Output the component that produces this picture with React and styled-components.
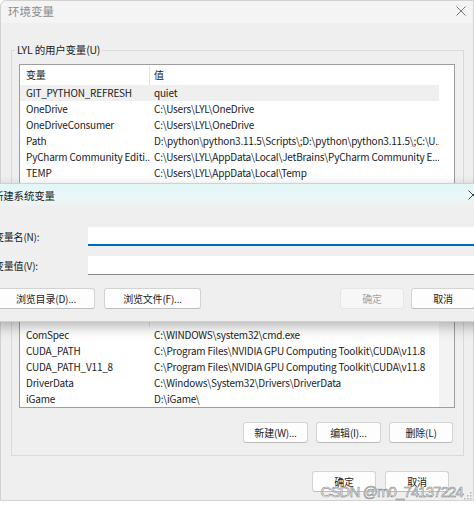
import React from "react";
import styled, { createGlobalStyle } from "styled-components";

const userVars = [
  ["GIT_PYTHON_REFRESH", "quiet"],
  ["OneDrive", "C:\\Users\\LYL\\OneDrive"],
  ["OneDriveConsumer", "C:\\Users\\LYL\\OneDrive"],
  ["Path", "D:\\python\\python3.11.5\\Scripts\\;D:\\python\\python3.11.5\\;C:\\U..."],
  ["PyCharm Community Editi...", "C:\\Users\\LYL\\AppData\\Local\\JetBrains\\PyCharm Community E..."],
  ["TEMP", "C:\\Users\\LYL\\AppData\\Local\\Temp"],
  ["TMP", "C:\\Users\\LYL\\AppData\\Local\\Temp"],
];

const systemVars = [
  ["ComSpec", "C:\\WINDOWS\\system32\\cmd.exe"],
  ["CUDA_PATH", "C:\\Program Files\\NVIDIA GPU Computing Toolkit\\CUDA\\v11.8"],
  ["CUDA_PATH_V11_8", "C:\\Program Files\\NVIDIA GPU Computing Toolkit\\CUDA\\v11.8"],
  ["DriverData", "C:\\Windows\\System32\\Drivers\\DriverData"],
  ["iGame", "D:\\iGame\\"],
];

const GlobalStyle = createGlobalStyle`
  html, body {
    margin: 0;
    padding: 0;
    background: #fff;
  }
  body {
    font-family: "Noto Sans CJK SC", "Microsoft YaHei", sans-serif;
    font-size: 10px;
    letter-spacing: -0.2px;
    color: #1b1b1b;
  }
  * {
    box-sizing: border-box;
  }
`;

const CloseIcon = ({ color = "#777" }) => (
  <svg width="10" height="10" viewBox="0 0 10 10">
    <path d="M0.5 0.5 L9.5 9.5 M9.5 0.5 L0.5 9.5" stroke={color} strokeWidth="1" fill="none" />
  </svg>
);

const VarList = ({ rows, height, track }) => (
  <ListBox style={{ height }}>
    <Table>
      <Row header>
        <NameCell header>变量</NameCell>
        <ValueCell>值</ValueCell>
      </Row>
      {rows.map(([name, value], i) => (
        <Row key={name} selected={track === false && i === 0}>
          <NameCell>{name}</NameCell>
          <ValueCell>{value}</ValueCell>
        </Row>
      ))}
    </Table>
    <ScrollTrack tinted={track} />
  </ListBox>
);

const App = () => {
  return (
    <Screen>
      <GlobalStyle />
      <Window>
        <TitleBar>
          <Title>环境变量</Title>
          <CloseIcon />
        </TitleBar>
        <Body>
          <Group>
            <Legend>LYL 的用户变量(U)</Legend>
            <VarList rows={userVars} height={170} track={false} />
            <ButtonRow top={10}>
              <Button w={65}>新建(N)...</Button>
              <Button w={65}>编辑(E)...</Button>
              <Button w={64}>删除(D)</Button>
            </ButtonRow>
          </Group>
          <Group gap>
            <Legend>系统变量(S)</Legend>
            <VarList rows={systemVars} height={102} track />
            <ButtonRow top={14}>
              <Button w={65}>新建(W)...</Button>
              <Button w={65}>编辑(I)...</Button>
              <Button w={64}>删除(L)</Button>
            </ButtonRow>
          </Group>
          <FooterRow>
            <Button w={64}>确定</Button>
            <Button w={64}>取消</Button>
          </FooterRow>
        </Body>
      </Window>

      <Dialog>
        <DialogTitle>
          <DialogCaption>新建系统变量</DialogCaption>
          <CloseIcon color="#444" />
        </DialogTitle>
        <DialogBody>
          <Field>
            <FieldLabel>变量名(N):</FieldLabel>
            <Input focused />
          </Field>
          <Field>
            <FieldLabel>变量值(V):</FieldLabel>
            <Input />
          </Field>
          <DialogButtons>
            <Button w={98}>浏览目录(D)...</Button>
            <Button w={97}>浏览文件(F)...</Button>
            <Spacer />
            <Button w={64} disabled>确定</Button>
            <Button w={64}>取消</Button>
          </DialogButtons>
        </DialogBody>
      </Dialog>

      <Grip width="8" height="8" viewBox="0 0 8 8">
        <rect x="6" y="0" width="1.5" height="1.5" fill="#b5b5b5" />
        <rect x="3" y="3" width="1.5" height="1.5" fill="#b5b5b5" />
        <rect x="6" y="3" width="1.5" height="1.5" fill="#b5b5b5" />
        <rect x="0" y="6" width="1.5" height="1.5" fill="#b5b5b5" />
        <rect x="3" y="6" width="1.5" height="1.5" fill="#b5b5b5" />
        <rect x="6" y="6" width="1.5" height="1.5" fill="#b5b5b5" />
      </Grip>
      <Watermark>CSDN @m0_74137224</Watermark>
    </Screen>
  );
};

const Screen = styled.div`
  position: relative;
  width: 474px;
  height: 505px;
  overflow: hidden;
  background: #fff;
`;

const Window = styled.div`
  width: 474px;
  height: 501px;
  display: flex;
  flex-direction: column;
  background: #efefef;
  border: 1px solid #d2d2d2;
  border-top-left-radius: 6px;
`;

const TitleBar = styled.div`
  height: 22px;
  flex-shrink: 0;
  display: flex;
  align-items: center;
  justify-content: space-between;
  padding: 0 7px 2px 7px;
  background: #f4f4f4;
  border-top-left-radius: 6px;
`;

const Title = styled.span`
  color: #8c8c8c;
  font-size: 11.5px;
  letter-spacing: 0;
`;

const Body = styled.div`
  display: flex;
  flex-direction: column;
  padding: 20px 9px 0 10px;
`;

const Group = styled.fieldset`
  margin: ${(p) => (p.gap ? "7px" : "0")} 0 0 0;
  padding: 7px 8px 12px 7px;
  border: 1px solid #d9d9d9;
  min-width: 0;
`;

const Legend = styled.legend`
  margin-left: -4px;
  padding: 0 2px;
  font-size: 10.5px;
  line-height: 14px;
  color: #1b1b1b;
`;

const ListBox = styled.div`
  display: flex;
  background: #fff;
  border: 1px solid #9d9d9d;
  overflow: hidden;
`;

const Table = styled.div`
  flex: 1;
  min-width: 0;
  display: flex;
  flex-direction: column;
`;

const Row = styled.div`
  display: grid;
  grid-template-columns: 130px 1fr;
  height: ${(p) => (p.header ? "20px" : "16px")};
  line-height: ${(p) => (p.header ? "20px" : "16px")};
  background: ${(p) => (p.selected ? "#efefef" : "#fff")};
  white-space: nowrap;
  color: #1b1b1b;
`;

const NameCell = styled.div`
  padding-left: 6px;
  overflow: hidden;
  border-right: ${(p) => (p.header ? "1px solid #e3e3e3" : "none")};
`;

const ValueCell = styled.div`
  padding-left: 4px;
  overflow: hidden;
`;

const ScrollTrack = styled.div`
  width: 15px;
  flex-shrink: 0;
  background: ${(p) => (p.tinted ? "#f3f3f3" : "#fff")};
`;

const ButtonRow = styled.div`
  display: flex;
  justify-content: flex-end;
  gap: 8px;
  margin-top: ${(p) => p.top}px;
  padding-right: 2px;
`;

const FooterRow = styled.div`
  display: flex;
  justify-content: flex-end;
  gap: 9px;
  margin-top: 15px;
  padding-right: 15px;
`;

const Button = styled.button`
  width: ${(p) => p.w}px;
  height: 21px;
  flex-shrink: 0;
  padding: 0;
  font-family: "Noto Sans CJK SC", "Microsoft YaHei", sans-serif;
  font-size: 10px;
  letter-spacing: -0.2px;
  color: ${(p) => (p.disabled ? "#a3a3a3" : "#1b1b1b")};
  background: ${(p) => (p.disabled ? "#f7f7f7" : "#fdfdfd")};
  border: 1px solid ${(p) => (p.disabled ? "#e6e6e6" : "#d3d3d3")};
  border-bottom-color: ${(p) => (p.disabled ? "#e6e6e6" : "#bdbdbd")};
  border-radius: 3px;
`;

const Dialog = styled.div`
  position: absolute;
  top: 183px;
  left: -6px;
  width: 492px;
  background: #efefef;
  border: 1px solid #c9d3d3;
  box-shadow: 0 5px 12px rgba(0, 0, 0, 0.28);
`;

const DialogTitle = styled.div`
  height: 22px;
  display: flex;
  align-items: center;
  justify-content: space-between;
  padding: 0 7px 0 0;
  background: linear-gradient(#e3f6f6, #e9f7f7 55%, #eff1f1);
  font-size: 10.5px;
  color: #1b1b1b;
`;

const DialogCaption = styled.span`
  margin-left: -2px;
`;

const DialogBody = styled.div`
  display: flex;
  flex-direction: column;
  gap: 10px;
  padding: 21px 10px 12px 2px;
`;

const Field = styled.div`
  display: grid;
  grid-template-columns: 91px 1fr;
  align-items: center;
`;

const FieldLabel = styled.label`
  margin-left: -3px;
  color: #1b1b1b;
`;

const Input = styled.div`
  height: 19px;
  background: #fff;
  border-bottom: ${(p) => (p.focused ? "2px solid #0067c0" : "1px solid #8a8a8a")};
`;

const DialogButtons = styled.div`
  display: flex;
  align-items: center;
  gap: 9px;
  margin-top: 3px;

  & > button:last-child {
    margin-left: -2px;
  }
`;

const Spacer = styled.div`
  flex: 1;
`;

const Grip = styled.svg`
  position: absolute;
  right: 2px;
  bottom: 5px;
`;

const Watermark = styled.div`
  position: absolute;
  right: 11px;
  bottom: 5px;
  font-family: "Liberation Sans", Arial, sans-serif;
  font-size: 15px;
  letter-spacing: -0.9px;
  color: #f2f2f2;
  -webkit-text-stroke: 0.5px #7d7d7d;
  pointer-events: none;
`;

export default App;
